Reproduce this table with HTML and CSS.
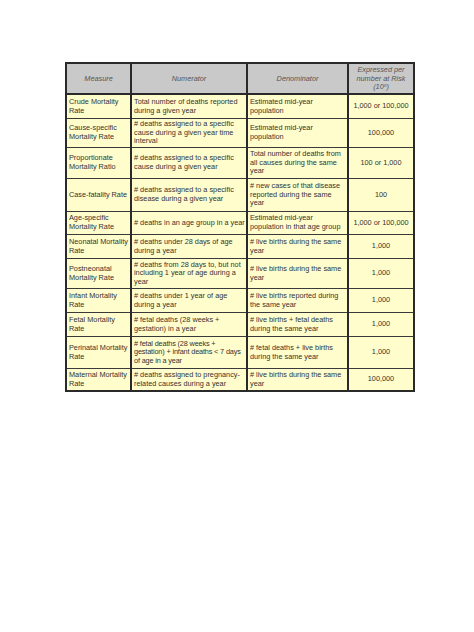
FILE: index.html
```html
<!DOCTYPE html>
<html>
<head>
<meta charset="utf-8">
<link rel="stylesheet" href="styles.css">
</head>
<body>
<div class="page">
<table class="rates">
  <colgroup>
    <col class="c-measure"><col class="c-num"><col class="c-den"><col class="c-exp">
  </colgroup>
  <thead>
    <tr class="h31">
      <th>Measure</th>
      <th>Numerator</th>
      <th>Denominator</th>
      <th>Expressed per number at Risk (10ⁿ)</th>
    </tr>
  </thead>
  <tbody>
    <tr class="h24">
      <td>Crude Mortality Rate</td>
      <td>Total number of deaths reported during a given year</td>
      <td>Estimated mid-year population</td>
      <td class="ctr">1,000 or 100,000</td>
    </tr>
    <tr class="h29">
      <td>Cause-specific Mortality Rate</td>
      <td># deaths assigned to a specific cause during a given year time interval</td>
      <td>Estimated mid-year population</td>
      <td class="ctr">100,000</td>
    </tr>
    <tr class="h31">
      <td>Proportionate Mortality Ratio</td>
      <td># deaths assigned to a specific cause during a given year</td>
      <td>Total number of deaths from all causes during the same year</td>
      <td class="ctr">100 or 1,000</td>
    </tr>
    <tr class="h33">
      <td>Case-fatality Rate</td>
      <td># deaths assigned to a specific disease during a given year</td>
      <td># new cases of that disease reported during the same year</td>
      <td class="ctr">100</td>
    </tr>
    <tr class="h23">
      <td>Age-specific Mortality Rate</td>
      <td class="nw"># deaths in an age group in a year</td>
      <td>Estimated mid-year population in that age group</td>
      <td class="ctr">1,000 or 100,000</td>
    </tr>
    <tr class="h24">
      <td>Neonatal Mortality Rate</td>
      <td># deaths under 28 days of age during a year</td>
      <td># live births during the same year</td>
      <td class="ctr">1,000</td>
    </tr>
    <tr class="h30">
      <td>Postneonatal Mortality Rate</td>
      <td># deaths from 28 days to, but not including 1 year of age during a year</td>
      <td># live births during the same year</td>
      <td class="ctr">1,000</td>
    </tr>
    <tr class="h24">
      <td>Infant Mortality Rate</td>
      <td># deaths under 1 year of age during a year</td>
      <td># live births reported during the same year</td>
      <td class="ctr">1,000</td>
    </tr>
    <tr class="h24">
      <td>Fetal Mortality Rate</td>
      <td># fetal deaths (28 weeks + gestation) in a year</td>
      <td># live births + fetal deaths during the same year</td>
      <td class="ctr">1,000</td>
    </tr>
    <tr class="h32">
      <td>Perinatal Mortality Rate</td>
      <td class="nw tight"># fetal deaths (28 weeks +<br>gestation) + infant deaths &lt; 7 days<br>of age in a year</td>
      <td># fetal deaths + live births during the same year</td>
      <td class="ctr">1,000</td>
    </tr>
    <tr class="h23">
      <td>Maternal Mortality Rate</td>
      <td># deaths assigned to pregnancy-related causes during a year</td>
      <td># live births during the same year</td>
      <td class="ctr">100,000</td>
    </tr>
  </tbody>
</table>
</div>
</body>
</html>
```

FILE: styles.css
```css
html, body {
  margin: 0;
  padding: 0;
  background: #ffffff;
}

.page {
  padding: 62px 0 0 65px;
}

.rates {
  border-collapse: collapse;
  table-layout: fixed;
  width: 348px;
  font-family: "Liberation Sans", Arial, sans-serif;
  font-size: 7.3px;
  line-height: 8.6px;
  color: #333333;
  border: 2px solid #2a2a2a;
}

.c-measure { width: 65px; }
.c-num { width: 116px; }
.c-den { width: 101px; }
.c-exp { width: 66px; }

.rates th,
.rates td {
  border-left: 2px solid #2a2a2a;
  border-right: 2px solid #2a2a2a;
  border-top: 1px solid #3a3a3a;
  border-bottom: 1px solid #3a3a3a;
  padding: 1px 2px 0 2px;
  vertical-align: middle;
  text-align: left;
  overflow: hidden;
}

.rates th {
  background: #c9c9c9;
  font-weight: normal;
  font-style: italic;
  color: #555555;
  text-align: center;
  border-bottom: 2px solid #2a2a2a;
  padding: 1px 4px 0 4px;
}

.rates td {
  background: #fffdcc;
}

.rates td.ctr {
  text-align: center;
}

.rates td.nw {
  white-space: nowrap;
}

.rates td.tight {
  letter-spacing: -0.15px;
}

.h23 { height: 23px; }
.h24 { height: 24px; }
.h29 { height: 29px; }
.h30 { height: 30px; }
.h31 { height: 31px; }
.h32 { height: 32px; }
.h33 { height: 33px; }
```
